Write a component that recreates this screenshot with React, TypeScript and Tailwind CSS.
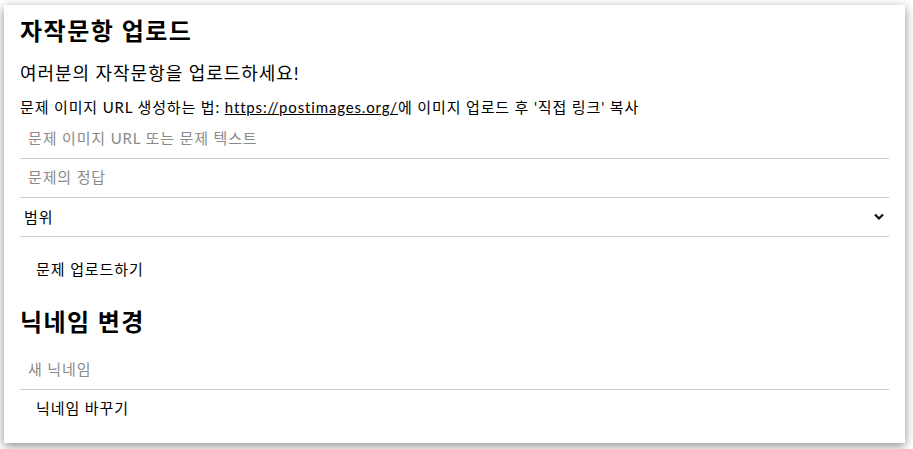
import React from "react";

const font = { fontFamily: 'Lato, "Noto Sans CJK KR", sans-serif' };

export default function App() {
  return (
    <div className="w-[913px] h-[449px] bg-white overflow-hidden" style={font}>
      <div className="ml-[4px] mt-[5px] w-[901px] h-[438px] bg-white shadow-[0_3px_10px_rgba(0,0,0,0.45)] px-4 pt-[8px] text-black">
        <h2 className="text-[24px] leading-[36px] font-bold tracking-[1.5px]">자작문항 업로드</h2>
        <p className="mt-[11px] text-[18px] leading-[27px] tracking-[0.95px]">여러분의 자작문항을 업로드하세요!</p>
        <p className="mt-[9px] text-[15px] leading-[22px] tracking-[0.85px]">
          문제 이미지 URL 생성하는 법:{" "}
          <a href="#" className="underline">https://postimages.org/</a>에 이미지 업로드 후 '직접 링크' 복사
        </p>
        <input
          className="mt-[2px] block w-full h-[39px] border-b border-[#cccccc] px-2 pb-[2px] text-[15px] tracking-[0.85px] outline-none placeholder:text-[#8a8a8a]"
          placeholder="문제 이미지 URL 또는 문제 텍스트"
        />
        <input
          className="block w-full h-[39px] border-b border-[#cccccc] px-2 pb-[2px] text-[15px] tracking-[0.85px] outline-none placeholder:text-[#8a8a8a]"
          placeholder="문제의 정답"
        />
        <div className="relative">
          <select
            className="block w-full h-[39px] border-b border-[#cccccc] pl-[4px] text-[15px] tracking-[0.85px] outline-none appearance-none bg-white"
            style={font}
            defaultValue="범위"
          >
            <option>범위</option>
          </select>
          <svg
            className="absolute right-[5px] top-[15px] pointer-events-none"
            width="10"
            height="8"
            viewBox="0 0 10 8"
          >
            <path d="M1 1.5 L5 5.5 L9 1.5" fill="none" stroke="#111" strokeWidth="2.2" />
          </svg>
        </div>
        <button className="mt-[13px] block px-4 py-2 text-[15px] leading-[22px] tracking-[0.9px] bg-transparent" style={font}>
          문제 업로드하기
        </button>
        <h2 className="mt-[16px] text-[24px] leading-[36px] font-bold tracking-[1.4px]">닉네임 변경</h2>
        <input
          className="mt-[11px] block w-full h-[39px] border-b border-[#cccccc] px-2 pb-[2px] text-[15px] tracking-[0.85px] outline-none placeholder:text-[#8a8a8a]"
          placeholder="새 닉네임"
        />
        <button className="block px-4 py-2 pt-[7px] pb-[9px] text-[15px] leading-[22px] tracking-[0.9px] bg-transparent" style={font}>
          닉네임 바꾸기
        </button>
      </div>
    </div>
  );
}
